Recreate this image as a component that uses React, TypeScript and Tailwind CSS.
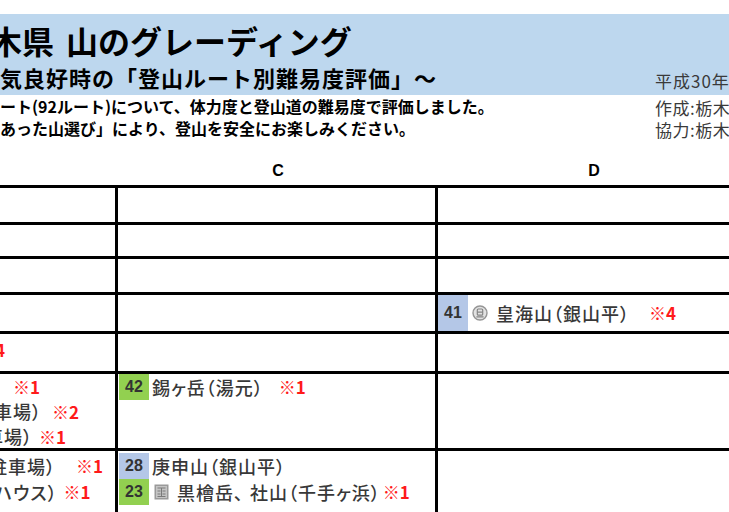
const cellText = "text-[18px] tracking-[1px] text-[#383838] font-medium [font-feature-settings:'palt'] whitespace-nowrap";
const mark = "text-[17px] font-bold text-[#ff1a1a] whitespace-nowrap";

function Num({ n, color, full }: { n: string; color: string; full?: boolean }) {
  return (
    <span
      className={`flex shrink-0 items-center justify-center w-[30px] ${full ? "h-full" : "h-[26px]"} ${color} font-['Liberation_Sans',sans-serif] font-bold text-[16px] text-[#333]`}
    >
      {n}
    </span>
  );
}

function RoundIcon() {
  return (
    <svg width="16" height="16" viewBox="0 0 16 16" className="shrink-0">
      <circle cx="8" cy="8" r="7" fill="#e2e2e2" stroke="#959595" strokeWidth="1.4" />
      <rect x="5.3" y="4" width="5.4" height="6.2" rx="1" fill="none" stroke="#858585" strokeWidth="1.2" />
      <path d="M5.3 7.1h5.4M4.4 11.8h7.2" stroke="#858585" strokeWidth="1.2" />
    </svg>
  );
}

function BoxIcon() {
  return (
    <svg width="15" height="16" viewBox="0 0 15 16" className="shrink-0">
      <rect x="0.5" y="0.5" width="14" height="15" fill="#9a9a9a" />
      <rect x="2" y="2" width="11" height="12" fill="#c4c4c4" />
      <path d="M3.5 4h8M3.5 7h3M8.5 7h3M3.5 10h3M8.5 10h3M7.5 4v8M3.5 12.5h8" stroke="#7a7a7a" strokeWidth="1" />
    </svg>
  );
}

function Row({
  h,
  left,
  mid,
  right,
}: {
  h: string;
  left?: React.ReactNode;
  mid?: React.ReactNode;
  right?: React.ReactNode;
}) {
  return (
    <div className={`flex ${h} border-b-[3px] border-black`}>
      <div className="w-[118px] shrink-0 border-r-[3px] border-black overflow-hidden">{left}</div>
      <div className="w-[320px] shrink-0 border-r-[3px] border-black overflow-hidden">{mid}</div>
      <div className="w-[312px] shrink-0 overflow-hidden">{right}</div>
    </div>
  );
}

export default function App() {
  return (
    <div className="w-[729px] h-[512px] overflow-hidden bg-white font-['Noto_Sans_CJK_JP',sans-serif] text-black">
      <div className="w-[750px]">
        <div className="h-[14px]" />

        {/* title band */}
        <div className="flex h-[81px] bg-[#bdd7ee]">
          <div className="w-[655px] shrink-0 overflow-hidden pt-[6px]">
            <div className="ml-[-42px] flex h-[40px] items-center text-[32px] font-bold leading-none whitespace-nowrap">
              <span>栃木県</span>
              <span className="ml-[12px]">山のグレーディング</span>
            </div>
            <div className="ml-[-46px] mt-[4px] h-[26px] leading-[26px] text-[22px] tracking-[1px] font-bold whitespace-nowrap">
              ～天気良好時の「登山ルート別難易度評価」～
            </div>
          </div>
          <div className="flex items-end pb-[2px] text-[17px] tracking-[1px] text-[#3a3a3a] whitespace-nowrap">
            平成30年3月
          </div>
        </div>

        {/* description */}
        <div className="flex">
          <div className="w-[655px] shrink-0 overflow-hidden text-[16px] font-bold leading-[22px] whitespace-nowrap">
            <div>ート(92ルート)について、体力度と登山道の難易度で評価しました。</div>
            <div>あった山選び」により、登山を安全にお楽しみください。</div>
          </div>
          <div className="pt-[2px] text-[17px] tracking-[0.5px] leading-[22px] text-[#3a3a3a] whitespace-nowrap">
            <div>作成:栃木県</div>
            <div>協力:栃木県山岳遭難防止対策協会</div>
          </div>
        </div>

        {/* column letters */}
        <div className="mt-[15px] flex h-[29px] items-center font-['Liberation_Sans',sans-serif] text-[16px] font-bold">
          <div className="w-[118px] shrink-0" />
          <div className="w-[320px] shrink-0 text-center">C</div>
          <div className="w-[312px] shrink-0 text-center">D</div>
        </div>

        {/* table */}
        <div className="border-t-[3px] border-black">
          <Row h="h-[37px]" />
          <Row h="h-[34px]" />
          <Row h="h-[36px]" />
          <Row
            h="h-[39px]"
            right={
              <div className="flex h-full items-center">
                <Num n="41" color="bg-[#b4c7e7]" full />
                <span className="ml-[4px] flex">
                  <RoundIcon />
                </span>
                <span className={`ml-[8px] ${cellText}`}>皇海山（銀山平）</span>
                <span className={`ml-[19px] ${mark}`}>※4</span>
              </div>
            }
          />
          <Row
            h="h-[40px]"
            left={
              <div className="flex h-full items-center pb-[6px]">
                <span className={`ml-[-22px] ${mark}`}>※4</span>
              </div>
            }
          />
          <Row
            h="h-[77px]"
            left={
              <div className="flex flex-col">
                <div className="flex h-[25px] items-center">
                  <span className={`ml-[13px] ${mark}`}>※1</span>
                </div>
                <div className="flex h-[25px] items-center">
                  <span className={`ml-[-6px] ${cellText}`}>車場）</span>
                  <span className={`ml-[10px] ${mark}`}>※2</span>
                </div>
                <div className="flex h-[25px] items-center">
                  <span className={`ml-[-15px] ${cellText}`}>車場）</span>
                  <span className={`ml-[6px] ${mark}`}>※1</span>
                </div>
              </div>
            }
            mid={
              <div className="flex h-[26px] items-center">
                <span className="ml-[1px] flex">
                  <Num n="42" color="bg-[#92d050]" />
                </span>
                <span className={`ml-[3px] ${cellText}`}>錫ヶ岳（湯元）</span>
                <span className={`ml-[15px] ${mark}`}>※1</span>
              </div>
            }
          />
          <Row
            h="h-[80px]"
            left={
              <div className="flex flex-col pt-[2px]">
                <div className="flex h-[26px] items-center">
                  <span className={`ml-[-11px] ${cellText}`}>駐車場）</span>
                  <span className={`ml-[20px] ${mark}`}>※1</span>
                </div>
                <div className="flex h-[26px] items-center">
                  <span className={`ml-[-20px] ${cellText} tracking-[-1px]`}>トハウス）</span>
                  <span className={`ml-[6px] ${mark}`}>※1</span>
                </div>
              </div>
            }
            mid={
              <div className="flex flex-col pt-[2px]">
                <div className="flex h-[26px] items-center">
                  <span className="ml-[1px] flex">
                    <Num n="28" color="bg-[#b4c7e7]" />
                  </span>
                  <span className={`ml-[3px] ${cellText}`}>庚申山（銀山平）</span>
                </div>
                <div className="flex h-[26px] items-center">
                  <span className="ml-[1px] flex">
                    <Num n="23" color="bg-[#92d050]" />
                  </span>
                  <span className="ml-[5px] flex">
                    <BoxIcon />
                  </span>
                  <span className={`ml-[8px] ${cellText}`}>黒檜岳、</span>
                  <span className={`ml-[6px] ${cellText}`}>社山（千手ヶ浜）</span>
                  <span className={`ml-[2px] ${mark}`}>※1</span>
                </div>
              </div>
            }
          />
        </div>
      </div>
    </div>
  );
}
